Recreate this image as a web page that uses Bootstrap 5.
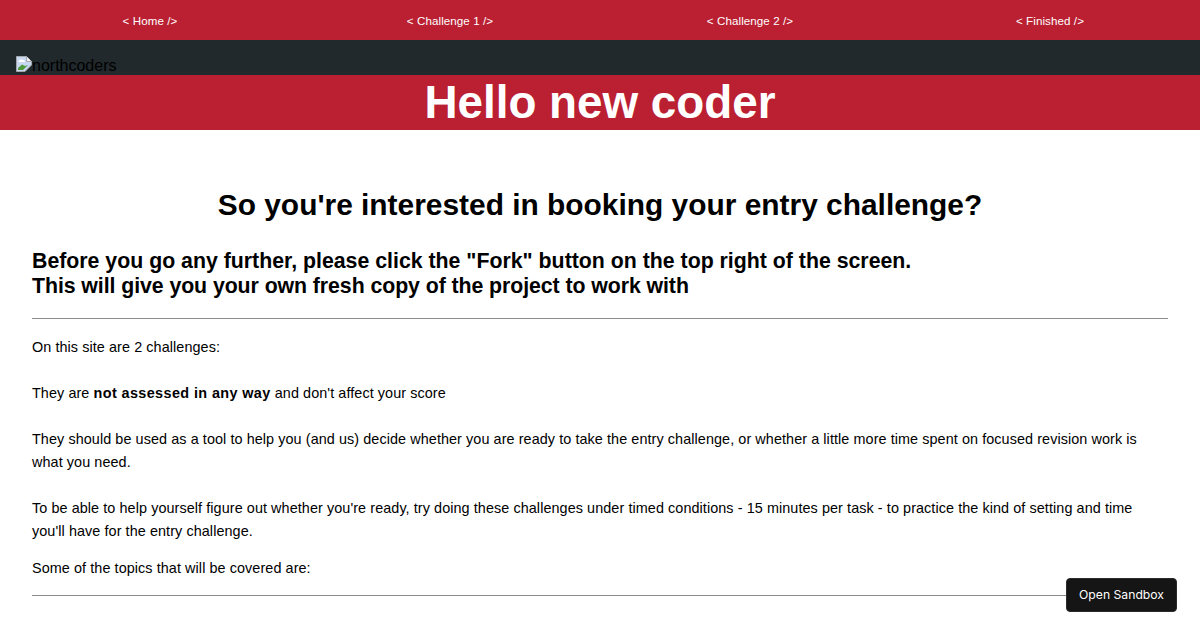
<!DOCTYPE html>
<html lang="en">
<head>
  <meta charset="UTF-8">
  <meta name="viewport" content="width=device-width, initial-scale=1">
  <title>Hello new coder</title>
  <link href="https://cdn.jsdelivr.net/npm/bootstrap@5.3.0/dist/css/bootstrap.min.css" rel="stylesheet">
  <style>
    html, body { height: 630px; overflow: hidden; }
    body { font-family: "Liberation Sans", Arial, sans-serif; font-size: 14.4px; line-height: 23px; letter-spacing: .08px; color: #000; }
    .top-links { height: 40px; padding-top: 1px; background: #ba2032; }
    .top-links a { color: #fff; font-size: 11.6px; text-decoration: none; flex: 1 1 0; text-align: center; }
    .logo-bar { height: 35px; background: #21292c; padding: 16px 16px 0; }
    .logo-alt { display: flex; font-size: 16px; line-height: 18px; letter-spacing: 0; color: #000; white-space: nowrap; }
    .logo-alt span { margin-top: 1px; }
    .logo-alt svg { flex: none; }
    .hero-band { height: 55px; background: #ba2032; color: #fff; }
    .hero-band h1 { font-size: 45.8px; line-height: 55px; font-weight: 700; letter-spacing: 0; margin: 0; }
    .intro-title { font-size: 29.9px; line-height: 37px; font-weight: 700; letter-spacing: 0; margin: 0; padding-top: 56px; }
    .fork-note { font-size: 21.3px; line-height: 25px; font-weight: 700; letter-spacing: 0; margin: 26px 0 0; }
    .fork-note span { letter-spacing: -.07px; }
    .page-body hr { border: 0; border-top: 1px solid #8c8c8c; opacity: 1; margin: 19px 0 17px; }
    .page-body hr.end-rule { margin-top: 15px; }
    .page-body p { margin: 0; }
    .page-body p + p { margin-top: 23px; }
    .page-body p.some-topics { margin-top: 14px; }
    .page-body strong { letter-spacing: .4px; }
    .open-sandbox { position: fixed; right: 23px; bottom: 18px; width: 111px; height: 34px; padding: 0; border: 1px solid #2b2b2b; border-radius: 4px; background: #151515; color: #fff; font-family: Inter, sans-serif; font-size: 12.2px; line-height: 32px; letter-spacing: 0; text-align: center; }
  </style>
</head>
<body>

<nav class="top-links d-flex align-items-center">
  <a href="#">&lt; Home /&gt;</a>
  <a href="#">&lt; Challenge 1 /&gt;</a>
  <a href="#">&lt; Challenge 2 /&gt;</a>
  <a href="#">&lt; Finished /&gt;</a>
</nav>

<div class="logo-bar">
  <div class="logo-alt"><svg width="16" height="16" viewBox="0 0 16 16"><path d="M.5.5h10l5 5v3.500L9 15.500H.5z" fill="#c8d8f2" stroke="#a3a6aa"/><path d="M2 14v-2l4-3.500 3 1.500 3-1-5 5z" fill="#4f9a3c"/><path d="M2.500 6c0-2 2-3 3.500-2 1.500-.5 3 .5 3 2z" fill="#fff"/><path d="M10.500 .5v5h5" fill="#f1f2f4" stroke="#a3a6aa"/></svg><span>northcoders</span></div>
</div>

<header class="hero-band text-center">
  <h1>Hello new coder</h1>
</header>

<main class="page-body px-2">
  <div class="px-4">
    <h2 class="intro-title text-center">So you're interested in booking your entry challenge?</h2>
    <h3 class="fork-note">Before you go any further, please click the "Fork" button on the top right of the screen.<br><span>This will give you your own fresh copy of the project to work with</span></h3>
    <hr>
    <p>On this site are 2 challenges:</p>
    <p>They are <strong>not assessed in any way</strong> and don't affect your score</p>
    <p>They should be used as a tool to help you (and us) decide whether you are ready to take the entry challenge, or whether a little more time spent on focused revision work is what you need.</p>
    <p>To be able to help yourself figure out whether you're ready, try doing these challenges under timed conditions - 15 minutes per task - to practice the kind of setting and time you'll have for the entry challenge.</p>
    <p class="some-topics">Some of the topics that will be covered are:</p>
    <hr class="end-rule">
  </div>
</main>

<a class="open-sandbox text-decoration-none" href="#">Open Sandbox</a>

<script src="https://cdn.jsdelivr.net/npm/bootstrap@5.3.0/dist/js/bootstrap.bundle.min.js"></script>
</body>
</html>
